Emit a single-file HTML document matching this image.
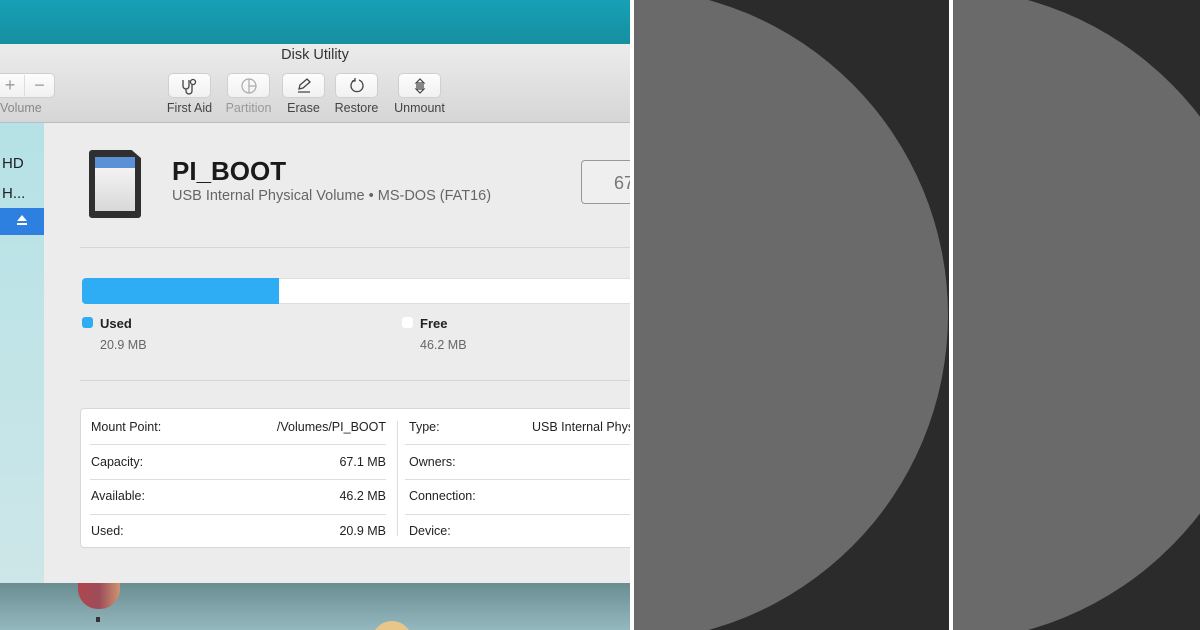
<!DOCTYPE html>
<html><head><meta charset="utf-8"><style>
*{margin:0;padding:0;box-sizing:border-box}
body{width:1200px;height:630px;position:relative;overflow:hidden;background:#fff;font-family:"Liberation Sans",sans-serif;color:#222}
.a{position:absolute}
.btn{position:absolute;top:73px;height:25px;background:linear-gradient(#fdfdfd,#f1f1f1);border:1px solid #d0d0d0;border-radius:5px;display:flex;align-items:center;justify-content:center}
.lbl{position:absolute;top:101px;font-size:12.5px;color:#444;text-align:center}
.t{position:absolute;font-size:12.5px;color:#222}
.ln{position:absolute;height:1px;background:#ddd}
</style></head><body>
<div class="a" style="left:0;top:0;width:630px;height:630px;overflow:hidden">
<div class="a" style="left:0;top:0;width:630px;height:44px;background:linear-gradient(#16a0b6,#168fa0)"></div>
<div class="a" style="left:0;top:583px;width:630px;height:47px;background:linear-gradient(#6a8d92,#93b8bd)"></div>
<div class="a" style="left:78px;top:583px;width:42px;height:26px;background:linear-gradient(90deg,#b0454f,#9c4c58,#cf9470);border-radius:0 0 20px 20px"></div>
<div class="a" style="left:96px;top:617px;width:4px;height:5px;background:#333"></div>
<div class="a" style="left:372px;top:621px;width:40px;height:20px;background:#e8c68a;border-radius:20px 20px 0 0"></div>

<div class="a" style="left:0;top:44px;width:630px;height:79px;background:linear-gradient(#ececec,#d6d6d6);border-bottom:1px solid #bdbdbd"></div>
<div class="a" style="left:0;top:47px;width:630px;text-align:center;font-size:14.5px;color:#333">Disk Utility</div>
<div class="btn" style="left:-5px;width:60px;"><span style="color:#999;font-size:18px;width:30px;text-align:center;border-right:1px solid #ddd">+</span><span style="color:#999;font-size:18px;width:30px;text-align:center">−</span></div>
<div class="lbl" style="left:0;color:#888">Volume</div>
<div class="btn" style="left:168px;width:43px"><svg width="20" height="18" viewBox="0 0 20 18" fill="none" stroke="#444" stroke-width="1.3"><path d="M3 3v6a3 3 0 006 0V3M6 12v2a3 3 0 006 0V8"/><circle cx="13" cy="5" r="2.5"/></svg></div>
<div class="lbl" style="left:158px;width:63px">First Aid</div>
<div class="btn" style="left:227px;width:43px"><svg width="18" height="18" viewBox="0 0 18 18" fill="none" stroke="#aaa" stroke-width="1.2"><circle cx="9" cy="9" r="7"/><path d="M9 2v14M9 9h7"/></svg></div>
<div class="lbl" style="left:218px;width:61px;color:#999">Partition</div>
<div class="btn" style="left:282px;width:43px"><svg width="18" height="18" viewBox="0 0 18 18" fill="none" stroke="#444" stroke-width="1.3"><path d="M3 15h12M4 12l1-4 7-6 3 3-7 6z"/></svg></div>
<div class="lbl" style="left:282px;width:43px">Erase</div>
<div class="btn" style="left:335px;width:43px"><svg width="18" height="18" viewBox="0 0 18 18" fill="none" stroke="#444" stroke-width="1.3"><path d="M7 3a6 6 0 104 0M7 1v3H4"/></svg></div>
<div class="lbl" style="left:326px;width:61px">Restore</div>
<div class="btn" style="left:398px;width:43px"><svg width="14" height="18" viewBox="0 0 14 18" fill="none" stroke="#444" stroke-width="1.2"><path d="M3 6l4-4 4 4zM3 12l4 4 4-4zM3 8h8M3 10h8"/></svg></div>
<div class="lbl" style="left:388px;width:63px">Unmount</div>

<div class="a" style="left:0;top:123px;width:44px;height:460px;background:linear-gradient(#b5e2e6,#cde6e8)"></div>
<div class="a" style="left:2px;top:155px;font-size:15px">HD</div>
<div class="a" style="left:2px;top:185px;font-size:15px">H...</div>
<div class="a" style="left:0;top:208px;width:44px;height:27px;background:#2d7fe0"></div>
<div class="a" style="left:17px;top:215px;width:0;height:0;border-left:5px solid transparent;border-right:5px solid transparent;border-bottom:6px solid #fff"></div>
<div class="a" style="left:17px;top:223px;width:10px;height:2px;background:#fff"></div>

<div class="a" style="left:44px;top:123px;width:586px;height:460px;background:#ececec"></div>
<div class="a" style="left:89px;top:150px;width:52px;height:68px;background:#2f2f2f;border-radius:3px;clip-path:polygon(0 0,82% 0,100% 12%,100% 100%,0 100%)"></div>
<div class="a" style="left:95px;top:157px;width:40px;height:54px;background:linear-gradient(#fafafa,#d8d8d8)"></div>
<div class="a" style="left:95px;top:157px;width:40px;height:11px;background:#5b8fd6"></div>
<div class="a" style="left:172px;top:156px;font-size:26px;font-weight:bold;color:#1a1a1a">PI_BOOT</div>
<div class="a" style="left:172px;top:188px;font-size:14.5px;color:#666">USB Internal Physical Volume • MS-DOS (FAT16)</div>
<div class="a" style="left:581px;top:160px;width:60px;height:44px;border:1px solid #999;border-radius:4px;background:#efefef;font-size:18px;color:#777;padding:12px 0 0 32px">67</div>
<div class="ln" style="left:80px;top:247px;width:550px;background:#d6d6d6"></div>
<div class="a" style="left:82px;top:278px;width:560px;height:26px;background:#fff;border-radius:4px;border:1px solid #ddd"></div>
<div class="a" style="left:82px;top:278px;width:197px;height:26px;background:#2eadf5;border-radius:4px 0 0 4px"></div>
<div class="a" style="left:82px;top:317px;width:11px;height:11px;background:#2eadf5;border-radius:3px"></div>
<div class="a" style="left:100px;top:316px;font-size:13px;font-weight:bold">Used</div>
<div class="a" style="left:100px;top:338px;font-size:12.5px;color:#666">20.9 MB</div>
<div class="a" style="left:402px;top:317px;width:11px;height:11px;background:#fff;border-radius:3px"></div>
<div class="a" style="left:420px;top:316px;font-size:13px;font-weight:bold">Free</div>
<div class="a" style="left:420px;top:338px;font-size:12.5px;color:#666">46.2 MB</div>
<div class="ln" style="left:80px;top:380px;width:550px;background:#d6d6d6"></div>

<div class="a" style="left:80px;top:408px;width:560px;height:140px;background:#fff;border:1px solid #d8d8d8;border-radius:4px"></div>
<div class="a" style="left:397px;top:421px;width:1px;height:115px;background:#ddd"></div>
<div class="ln" style="left:90px;top:444px;width:296px"></div><div class="ln" style="left:90px;top:479px;width:296px"></div><div class="ln" style="left:90px;top:514px;width:296px"></div>
<div class="ln" style="left:405px;top:444px;width:225px"></div><div class="ln" style="left:405px;top:479px;width:225px"></div><div class="ln" style="left:405px;top:514px;width:225px"></div>
<div class="t" style="left:91px;top:420px">Mount Point:</div><div class="t" style="right:244px;top:420px">/Volumes/PI_BOOT</div>
<div class="t" style="left:91px;top:455px">Capacity:</div><div class="t" style="right:244px;top:455px">67.1 MB</div>
<div class="t" style="left:91px;top:489px">Available:</div><div class="t" style="right:244px;top:489px">46.2 MB</div>
<div class="t" style="left:91px;top:524px">Used:</div><div class="t" style="right:244px;top:524px">20.9 MB</div>
<div class="t" style="left:409px;top:420px">Type:</div><div class="t" style="left:532px;top:420px;white-space:nowrap;width:98px;overflow:hidden">USB Internal Physical</div>
<div class="t" style="left:409px;top:455px">Owners:</div>
<div class="t" style="left:409px;top:489px">Connection:</div>
<div class="t" style="left:409px;top:524px">Device:</div>
</div>

<div class="a" style="left:634px;top:0;width:315px;height:630px;background:#2b2b2b;overflow:hidden"><div class="a" style="left:-340px;top:-12px;width:654px;height:654px;border-radius:50%;background:#6a6a6a"></div></div>
<div class="a" style="left:953px;top:0;width:247px;height:630px;background:#2b2b2b;overflow:hidden"><div class="a" style="left:-340px;top:-12px;width:654px;height:654px;border-radius:50%;background:#6a6a6a"></div></div>
</body></html>
